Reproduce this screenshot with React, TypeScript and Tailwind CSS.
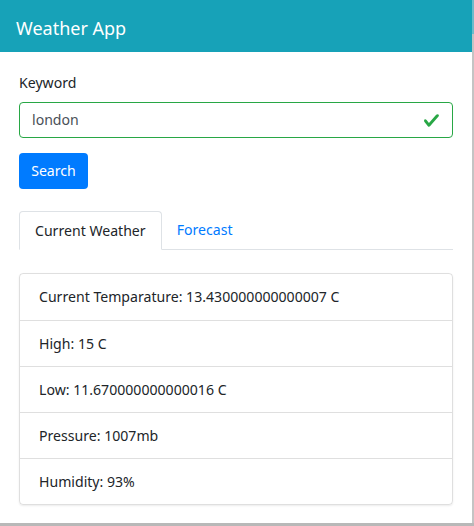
import React from 'react';

const rows = [
  'Current Temparature: 13.430000000000007 C',
  'High: 15 C',
  'Low: 11.670000000000016 C',
  'Pressure: 1007mb',
  'Humidity: 93%',
];

const CheckIcon = () => (
  <svg viewBox="0 0 8 8" className="h-[17px] w-[17px]" fill="#28a745">
    <path d="M2.3 6.73L.6 4.53c-.4-1.04.46-1.4 1.1-.8l1.1 1.4 3.4-3.8c.6-.63 1.6-.27 1.2.7l-4 4.6c-.43.5-.8.4-1.1.1z" />
  </svg>
);

export default function App() {
  return (
    <div
      className="flex h-[526px] w-[474px] flex-col overflow-hidden bg-white text-[14.1px] text-[#212529]"
      style={{ fontFamily: '"Noto Sans", "Open Sans", sans-serif' }}
    >
      <div className="flex flex-1">
        <div className="flex w-[472px] flex-col">
          {/* Header */}
          <header className="flex h-[52px] items-center bg-[#17a2b8] px-4">
            <h1 className="mt-[3px] text-[18px] leading-none text-white">Weather App</h1>
          </header>

          {/* Search form */}
          <main className="flex flex-col px-[19px] pt-[20px]">
            <label className="mb-[8px] leading-[22px]">Keyword</label>
            <div className="flex h-[36px] items-center rounded-[4px] border border-[#28a745] pl-[12px] pr-[12px]">
              <span className="flex-1 text-[#495057]">london</span>
              <CheckIcon />
            </div>
            <button className="mt-[15px] h-[36px] w-[69px] rounded-[4px] bg-[#007bff] text-white">
              Search
            </button>

            {/* Tabs */}
            <div className="mt-[22px] flex h-[39px] border-b border-[#dee2e6]">
              <div className="-mb-px flex items-center rounded-t-[4px] border border-b-white border-[#dee2e6] bg-white px-[15px]">
                Current Weather
              </div>
              <div className="flex items-center px-[15px] text-[#007bff]">Forecast</div>
            </div>

            {/* Weather list */}
            <ul className="mt-[23px] flex flex-col rounded-[4px] border border-[rgba(0,0,0,0.125)] shadow-[0_1px_2px_rgba(0,0,0,0.08)]">
              {rows.map((r, i) => (
                <li
                  key={r}
                  className={`flex h-[46px] items-center px-[19px] ${i > 0 ? 'border-t border-[rgba(0,0,0,0.125)]' : ''}`}
                >
                  {r}
                </li>
              ))}
            </ul>
          </main>
        </div>
        <div className="flex w-[2px] flex-col">
          <div className="h-[34px] bg-[#6fbccb]" />
          <div className="flex-1 bg-[#c4c4c4]" />
        </div>
      </div>
      <div className="h-[3px] bg-[#b8b8b8]" />
    </div>
  );
}
